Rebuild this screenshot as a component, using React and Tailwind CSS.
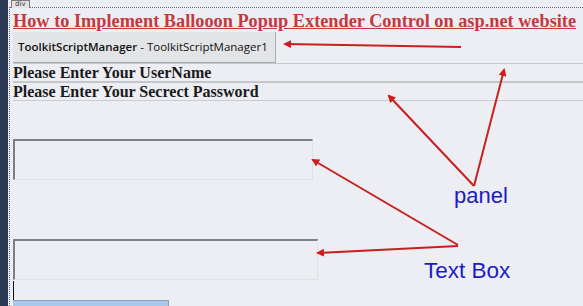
import React from 'react';

// red annotation arrows drawn on top of the designer view
function Arrows() {
  return (
    <svg className="absolute inset-0 pointer-events-none" width="583" height="306" viewBox="0 0 583 306">
      <defs>
        <marker id="head" markerWidth="8" markerHeight="8" refX="6" refY="4" orient="auto" markerUnits="userSpaceOnUse">
          <path d="M0,0 L8,4 L0,8 z" fill="#d01c1c" />
        </marker>
      </defs>
      <g stroke="#c81f1f" strokeWidth="2" fill="none">
        <line x1="461" y1="47" x2="285" y2="44" markerEnd="url(#head)" />
        <line x1="474" y1="186" x2="389" y2="96" markerEnd="url(#head)" />
        <line x1="474" y1="186" x2="504" y2="70" markerEnd="url(#head)" />
        <line x1="458" y1="245" x2="313" y2="160" markerEnd="url(#head)" />
        <line x1="458" y1="246" x2="318" y2="253" markerEnd="url(#head)" />
      </g>
    </svg>
  );
}

export default function App() {
  return (
    <div className="relative w-[583px] h-[306px] overflow-hidden bg-[#eceef3] flex" style={{ fontFamily: '"Liberation Serif", serif' }}>
      <div className="w-[8px] shrink-0 bg-[#2c3a55]" />
      <div className="relative flex-1 border-l border-t border-dotted border-[#5a6a8a] mt-[7px] ml-[1px] pl-[3px]">
        <div className="absolute left-[1px] top-[-8px] h-[8px] px-[3px] border border-b-0 border-[#7a7a7a] bg-[#e4e4e4] text-[7px] leading-[7px] text-[#333]" style={{ fontFamily: 'Tahoma, "DejaVu Sans", sans-serif' }}>
          div
        </div>

        <h1 className="text-[#c6383d] font-bold underline text-[18.3px] leading-[21px] mt-[3px] whitespace-nowrap">
          How to Implement Ballooon Popup Extender Control on asp.net website
        </h1>

        <div className="w-[263px] h-[31px] bg-[#e3e4e6] border-r border-b border-[#a9abae] flex items-center pl-[5px] text-[11.5px] text-[#111] whitespace-nowrap" style={{ fontFamily: '"Open Sans", "DejaVu Sans", sans-serif' }}>
          <span className="font-semibold">ToolkitScriptManager</span>
          <span>&nbsp;- ToolkitScriptManager1</span>
        </div>

        <div className="border-t border-[#c6c8cc] text-[16px] font-bold text-[#1a1a1a] leading-[17px]">Please Enter Your UserName</div>
        <div className="border-t-2 border-[#c4c6ca] text-[16px] font-bold text-[#1a1a1a] leading-[17px]">Please Enter Your Secrect Password</div>
        <div className="border-t border-[#c9cbcf] h-[39px]" />

        <div className="w-[300px] h-[41px] border-t-2 border-l-2 border-[#7c8088] border-r border-b border-r-[#dfe1e5] border-b-[#dfe1e5]" />
        <div className="h-[59px]" />
        <div className="w-[305px] h-[41px] border-t-2 border-l-2 border-[#7c8088] border-r border-b border-r-[#dfe1e5] border-b-[#dfe1e5]" />
        <div className="w-[1px] h-[19px] bg-[#111] mt-[1px]" />
        <div className="w-[156px] h-[8px] bg-[#a9c8ea] border-t border-r border-[#8aa0bb]" />

        <div className="absolute left-[444px] top-[177px] text-[22px] text-[#1c1cc4] leading-none" style={{ fontFamily: '"Liberation Sans", Arial, sans-serif' }}>panel</div>
        <div className="absolute left-[414px] top-[252px] text-[22.5px] text-[#1c1cc4] leading-none" style={{ fontFamily: '"Liberation Sans", Arial, sans-serif' }}>Text Box</div>
      </div>
      <Arrows />
    </div>
  );
}
